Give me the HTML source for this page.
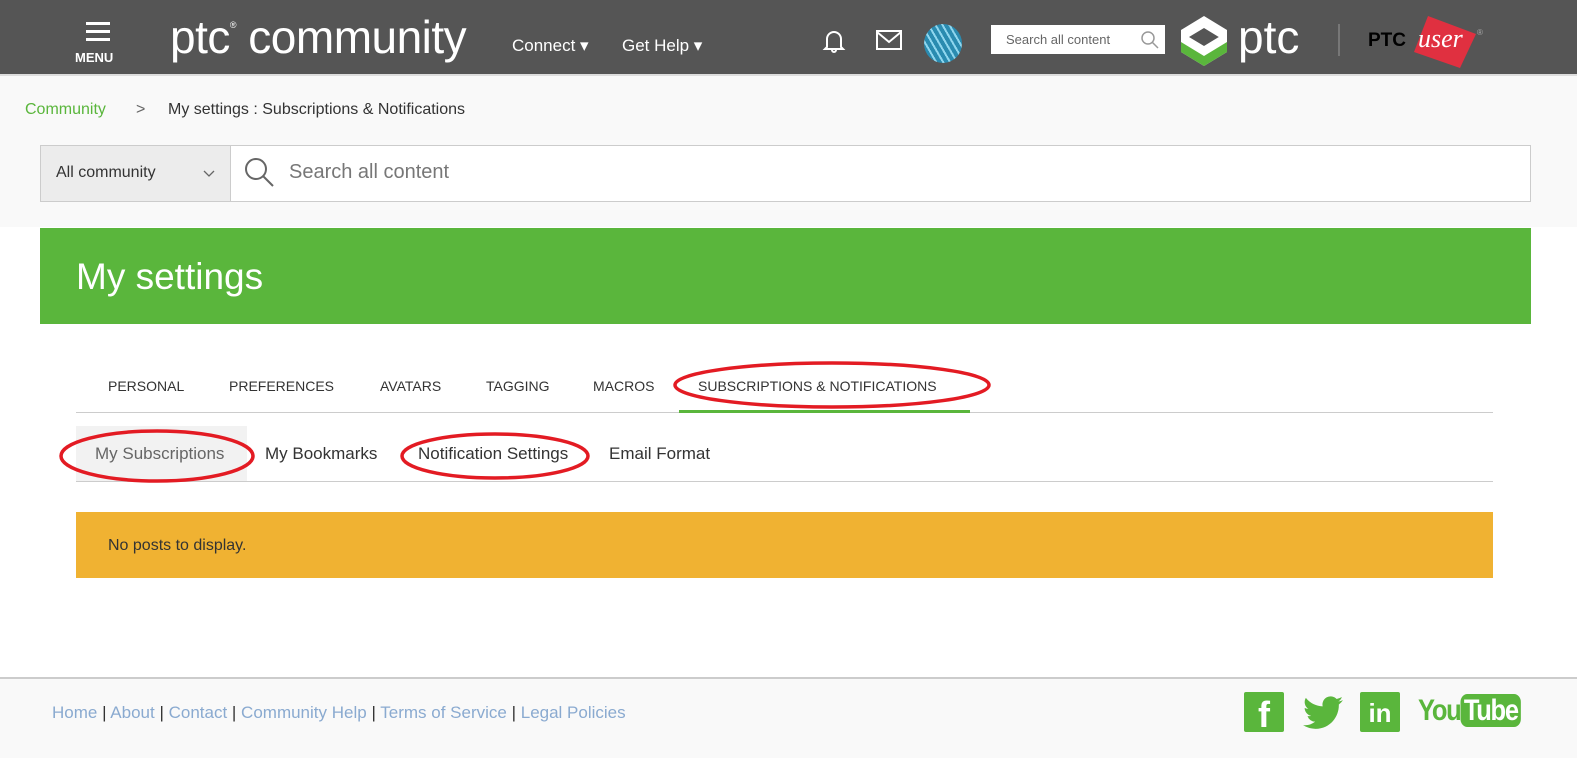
<!DOCTYPE html>
<html><head><meta charset="utf-8"><style>
*{margin:0;padding:0;box-sizing:border-box}
body{width:1577px;height:758px;position:relative;background:#fff;font-family:"Liberation Sans",Arial,sans-serif;overflow:hidden}
.a{position:absolute;white-space:nowrap}
</style></head><body>
<div class="a" style="left:0;top:0;width:1577px;height:74px;background:#555"></div>
<div class="a" style="left:0;top:74px;width:1577px;height:2px;background:#ddd"></div>
<div class="a" style="left:0;top:76px;width:1577px;height:151px;background:#f9f9f9"></div>
<!-- menu -->
<div class="a" style="left:86px;top:22px;width:24px;height:3px;background:#fff"></div>
<div class="a" style="left:86px;top:30px;width:24px;height:3px;background:#fff"></div>
<div class="a" style="left:86px;top:38px;width:24px;height:3px;background:#fff"></div>
<div class="a" style="left:75px;top:50px;color:#fff;font-weight:bold;font-size:13px">MENU</div>
<div class="a" style="left:170px;top:10px;color:#fff;font-size:46px;letter-spacing:-0.5px">ptc<span style="font-size:9px;vertical-align:top;position:relative;top:10px">®</span> community</div>
<div class="a" style="left:512px;top:36px;color:#fff;font-size:17px">Connect ▾</div>
<div class="a" style="left:622px;top:36px;color:#fff;font-size:17px">Get Help ▾</div>
<svg class="a" style="left:822px;top:28px" width="24" height="26" viewBox="0 0 24 26"><path d="M5 19V11a7 7 0 0 1 14 0v8l2 2H3z M10 22a2 2 0 0 0 4 0" fill="none" stroke="#fff" stroke-width="2"/></svg>
<svg class="a" style="left:876px;top:30px" width="26" height="20"><rect x="1" y="1" width="24" height="18" fill="none" stroke="#fff" stroke-width="2"/><path d="M1 2l12 10 12-10" fill="none" stroke="#fff" stroke-width="2"/></svg>
<div class="a" style="left:924px;top:24px;width:38px;height:39px;border-radius:50%;background:repeating-linear-gradient(60deg,#2a8bb0 0 4px,#8fd6ee 4px 6px)"></div>
<div class="a" style="left:991px;top:25px;width:174px;height:29px;background:#fff"></div>
<div class="a" style="left:1006px;top:32px;color:#666;font-size:13px">Search all content</div>
<svg class="a" style="left:1140px;top:30px" width="20" height="20"><circle cx="8" cy="8" r="6" fill="none" stroke="#999" stroke-width="1.5"/><path d="M12 12l6 6" stroke="#999" stroke-width="1.5"/></svg>
<svg class="a" style="left:1181px;top:16px" width="46" height="50" viewBox="0 0 46 50"><path d="M23 0L46 14V26L23 12 8 21 23 30 46 16V36L23 50 0 36V14z" fill="#fff"/><path d="M0 26L23 40 46 26V36L23 50 0 36z" fill="#5ab63c"/></svg>
<div class="a" style="left:1238px;top:10px;color:#fff;font-size:46px">ptc</div>
<div class="a" style="left:1338px;top:24px;width:2px;height:32px;background:#777"></div>
<svg class="a" style="left:1414px;top:14px" width="64" height="56"><path d="M14 2l48 18-16 34L0 38z" fill="#e03040"/></svg>
<div class="a" style="left:1368px;top:30px;color:#000;font-weight:bold;font-size:19px">PTC</div>
<div class="a" style="left:1418px;top:24px;color:#fff;font-style:italic;font-family:'Liberation Serif',serif;font-size:26px">user</div>
<div class="a" style="left:1477px;top:28px;color:#aaa;font-size:8px">®</div>
<!-- breadcrumb -->
<div class="a" style="left:25px;top:101px;color:#5ab63c;font-size:16px">Community</div>
<div class="a" style="left:136px;top:101px;color:#666;font-size:16px">&gt;</div>
<div class="a" style="left:168px;top:101px;color:#333;font-size:16px">My settings : Subscriptions &amp; Notifications</div>
<!-- search -->
<div class="a" style="left:40px;top:145px;width:1491px;height:57px;border:1px solid #ccc;background:#fff"></div>
<div class="a" style="left:40px;top:145px;width:191px;height:57px;border:1px solid #ccc;background:#ececec"></div>
<div class="a" style="left:56px;top:164px;color:#333;font-size:16px">All community</div>
<svg class="a" style="left:203px;top:169px" width="12" height="10"><path d="M1 2l5 5 5-5" fill="none" stroke="#666" stroke-width="1.3"/></svg>
<svg class="a" style="left:244px;top:157px" width="32" height="32"><circle cx="12" cy="12" r="10" fill="none" stroke="#666" stroke-width="2"/><path d="M19 19l10 10" stroke="#666" stroke-width="2"/></svg>
<div class="a" style="left:289px;top:161px;color:#777;font-size:20px">Search all content</div>
<!-- banner -->
<div class="a" style="left:40px;top:228px;width:1491px;height:96px;background:#5ab63c"></div>
<div class="a" style="left:76px;top:256px;color:#fff;font-size:37px">My settings</div>
<!-- tabs -->
<div class="a" style="left:108px;top:378px;color:#333;font-size:14px">PERSONAL</div>
<div class="a" style="left:229px;top:378px;color:#333;font-size:14px">PREFERENCES</div>
<div class="a" style="left:380px;top:378px;color:#333;font-size:14px">AVATARS</div>
<div class="a" style="left:486px;top:378px;color:#333;font-size:14px">TAGGING</div>
<div class="a" style="left:593px;top:378px;color:#333;font-size:14px">MACROS</div>
<div class="a" style="left:698px;top:378px;color:#333;font-size:14px">SUBSCRIPTIONS &amp; NOTIFICATIONS</div>
<div class="a" style="left:76px;top:412px;width:1417px;height:1px;background:#ccc"></div>
<div class="a" style="left:679px;top:410px;width:291px;height:3px;background:#5ab63c"></div>
<div class="a" style="left:76px;top:426px;width:171px;height:55px;background:#f2f2f2"></div>
<div class="a" style="left:95px;top:444px;color:#666;font-size:17px">My Subscriptions</div>
<div class="a" style="left:265px;top:444px;color:#333;font-size:17px">My Bookmarks</div>
<div class="a" style="left:418px;top:444px;color:#333;font-size:17px">Notification Settings</div>
<div class="a" style="left:609px;top:444px;color:#333;font-size:17px">Email Format</div>
<div class="a" style="left:76px;top:481px;width:1417px;height:1px;background:#ccc"></div>
<div class="a" style="left:76px;top:512px;width:1417px;height:66px;background:#f0b232"></div>
<div class="a" style="left:108px;top:537px;color:#333;font-size:16px">No posts to display.</div>
<svg class="a" style="left:0;top:0" width="1577" height="758"><g fill="none" stroke="#e31b23" stroke-width="3.5">
<ellipse cx="832" cy="385" rx="157" ry="22"/><ellipse cx="157" cy="456" rx="96" ry="25"/><ellipse cx="495" cy="456" rx="93" ry="22"/></g></svg>
<!-- footer -->
<div class="a" style="left:0;top:677px;width:1577px;height:81px;background:#f9f9f9;border-top:2px solid #ccc"></div>
<div class="a" style="left:52px;top:703px;color:#8aaad0;font-size:17px">Home <span style="color:#333">|</span> About <span style="color:#333">|</span> Contact <span style="color:#333">|</span> Community Help <span style="color:#333">|</span> Terms of Service <span style="color:#333">|</span> Legal Policies</div>
<div class="a" style="left:1244px;top:692px;width:40px;height:40px;background:#5ab63c;border-radius:2px;color:#fff;font-weight:bold;font-size:36px;text-align:center;line-height:46px">f</div>
<svg class="a" style="left:1303px;top:696px" width="40" height="34" viewBox="0 0 24 20"><path d="M24 2.3a9.8 9.8 0 0 1-2.8.8A4.9 4.9 0 0 0 23.3.4a9.9 9.9 0 0 1-3.1 1.2A4.9 4.9 0 0 0 11.8 6 14 14 0 0 1 1.7.9a4.9 4.9 0 0 0 1.5 6.6A4.9 4.9 0 0 1 1 6.9a4.9 4.9 0 0 0 3.9 4.8 4.9 4.9 0 0 1-2.2.1 4.9 4.9 0 0 0 4.6 3.4A9.9 9.9 0 0 1 0 17.3 14 14 0 0 0 7.5 19.5c9 0 14-7.5 14-14v-.6A10 10 0 0 0 24 2.3z" fill="#5ab63c"/></svg>
<div class="a" style="left:1360px;top:692px;width:40px;height:40px;background:#5ab63c;border-radius:2px;color:#fff;font-weight:bold;font-size:26px;text-align:center;line-height:42px">in</div>
<div class="a" style="left:1418px;top:694px;color:#5ab63c;font-weight:bold;font-size:30px;letter-spacing:-1.5px;transform:scaleX(0.85);transform-origin:left">You<span style="background:#5ab63c;color:#fff;border-radius:8px;padding:0 4px">Tube</span></div>
</body></html>
